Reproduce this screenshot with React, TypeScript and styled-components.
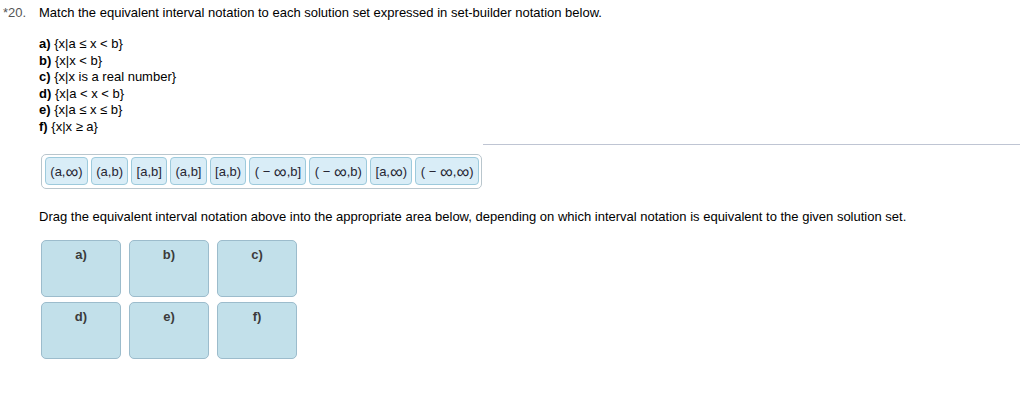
import React from "react";
import styled, { createGlobalStyle } from "styled-components";

const Global = createGlobalStyle`
  html, body { margin: 0; padding: 0; background: #fff; }
  body {
    font-family: "Liberation Sans", Arial, sans-serif;
    font-size: 13px;
    color: #000;
  }
`;

const Page = styled.div`
  width: 1020px;
  height: 403px;
  padding-top: 5px;
  box-sizing: border-box;
  overflow: hidden;
`;

const Question = styled.div`
  display: flex;
  align-items: flex-start;
`;

const Number = styled.div`
  width: 39px;
  flex: none;
  padding-left: 3px;
  box-sizing: border-box;
  color: #555;
  line-height: 15px;
`;

const Body = styled.div`
  flex: 1;
  display: flex;
  flex-direction: column;
`;

const Prompt = styled.div`
  line-height: 15px;
`;

const Options = styled.div`
  margin-top: 16px;
  display: flex;
  flex-direction: column;
`;

const Option = styled.div`
  line-height: 16.5px;
`;

const Label = styled.b`
  font-weight: bold;
`;

const BankRow = styled.div`
  margin-top: 9px;
  margin-left: 2px;
  display: flex;
  align-items: flex-start;
`;

const Bank = styled.div`
  margin-top: 10px;
  display: flex;
  gap: 3px;
  padding: 2px 2px 3px 3px;
  border: 1px solid #b9c6cd;
  border-radius: 5px;
  background: #fff;
`;

const Rule = styled.div`
  flex: 1;
  border-top: 1px solid #bfc5d3;
  margin-left: 1px;
`;

const Token = styled.div`
  height: 28px;
  box-sizing: border-box;
  padding: 0 4.3px;
  display: flex;
  align-items: center;
  border: 1px solid #9dcadc;
  border-radius: 4px;
  background: #d9edf7;
  color: #262633;
  white-space: pre;
`;

const Inf = styled.span`
  font-size: 18px;
  line-height: 1;
  position: relative;
  top: 1px;
`;

const Instruction = styled.div`
  margin-top: 20px;
  line-height: 15px;
`;

const Grid = styled.div`
  margin-top: 16px;
  margin-left: 2px;
  display: grid;
  grid-template-columns: repeat(3, 80px);
  column-gap: 8px;
  row-gap: 5px;
`;

const Drop = styled.div`
  height: 57px;
  box-sizing: border-box;
  border: 1px solid #9cbccc;
  border-radius: 5px;
  background: #c2e0ea;
  padding-top: 6px;
  text-align: center;
  font-weight: bold;
  color: #3b3b3b;
  line-height: 15px;
`;

const renderToken = (t: string) =>
  t.split("∞").flatMap((part, i, arr) =>
    i < arr.length - 1 ? [part, <Inf key={i}>∞</Inf>] : [part]
  );

const tokens = [
  "(a,∞)",
  "(a,b)",
  "[a,b]",
  "(a,b]",
  "[a,b)",
  "( − ∞,b]",
  "( − ∞,b)",
  "[a,∞)",
  "( − ∞,∞)",
];

const options: [string, string][] = [
  ["a)", "{x|a ≤ x < b}"],
  ["b)", "{x|x < b}"],
  ["c)", "{x|x is a real number}"],
  ["d)", "{x|a < x < b}"],
  ["e)", "{x|a ≤ x ≤ b}"],
  ["f)", "{x|x ≥ a}"],
];

const zones = ["a)", "b)", "c)", "d)", "e)", "f)"];

export default function App() {
  return (
    <Page>
      <Global />
      <Question>
        <Number>*20.</Number>
        <Body>
          <Prompt>
            Match the equivalent interval notation to each solution set expressed in set-builder notation below.
          </Prompt>
          <Options>
            {options.map(([l, s]) => (
              <Option key={l}>
                <Label>{l}</Label> {s}
              </Option>
            ))}
          </Options>
          <BankRow>
            <Bank>
              {tokens.map((t) => (
                <Token key={t}>{renderToken(t)}</Token>
              ))}
            </Bank>
            <Rule />
          </BankRow>
          <Instruction>
            Drag the equivalent interval notation above into the appropriate area below, depending on which interval notation is equivalent to the given solution set.
          </Instruction>
          <Grid>
            {zones.map((z) => (
              <Drop key={z}>{z}</Drop>
            ))}
          </Grid>
        </Body>
      </Question>
    </Page>
  );
}
